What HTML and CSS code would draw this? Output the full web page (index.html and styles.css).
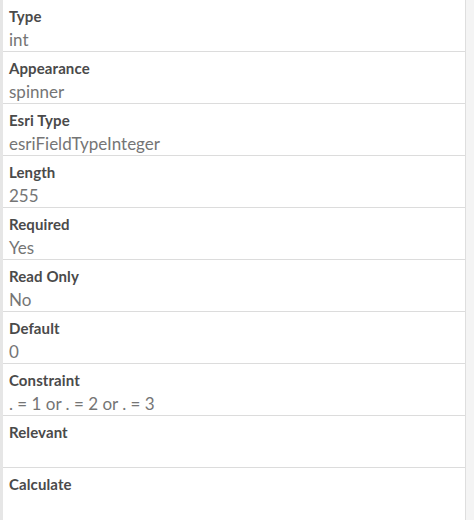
FILE: index.html
```html
<!DOCTYPE html>
<html>
<head>
<meta charset="utf-8">
<link rel="stylesheet" href="styles.css">
</head>
<body>
<div class="frame">
  <div class="edge-left"></div>
  <div class="list">
    <div class="row"><div class="label">Type</div><div class="value">int</div></div>
    <div class="row"><div class="label">Appearance</div><div class="value">spinner</div></div>
    <div class="row"><div class="label">Esri Type</div><div class="value">esriFieldTypeInteger</div></div>
    <div class="row"><div class="label">Length</div><div class="value">255</div></div>
    <div class="row"><div class="label">Required</div><div class="value">Yes</div></div>
    <div class="row"><div class="label">Read Only</div><div class="value">No</div></div>
    <div class="row"><div class="label">Default</div><div class="value">0</div></div>
    <div class="row"><div class="label">Constraint</div><div class="value">. = 1 or . = 2 or . = 3</div></div>
    <div class="row"><div class="label">Relevant</div><div class="value"></div></div>
    <div class="row"><div class="label">Calculate</div><div class="value"></div></div>
  </div>
  <div class="edge-right"></div>
</div>
</body>
</html>
```
FILE: styles.css
```css
html, body {
  margin: 0;
  padding: 0;
  background: #ffffff;
}
.frame {
  display: flex;
  width: 474px;
  height: 520px;
  overflow: hidden;
}
.edge-left {
  width: 3px;
  flex: none;
  background: #e6e6e6;
}
.list {
  width: 462px;
  flex: none;
  display: flex;
  flex-direction: column;
}
.edge-right {
  flex: 1;
  border-left: 1px solid #dedede;
  background: #f4f4f4;
}
.row {
  height: 52px;
  flex: none;
  box-sizing: border-box;
  border-bottom: 1px solid #dcdcdc;
  padding: 6px 0 0 6px;
  display: flex;
  flex-direction: column;
}
.row:last-child {
  border-bottom: none;
}
.label {
  font-family: Lato, "Open Sans", sans-serif;
  font-weight: 700;
  font-size: 15px;
  line-height: 20px;
  letter-spacing: 0.1px;
  color: #4a4a4a;
}
.value {
  font-family: Lato, "Open Sans", sans-serif;
  font-size: 17px;
  line-height: 28px;
  color: #757575;
}
```
